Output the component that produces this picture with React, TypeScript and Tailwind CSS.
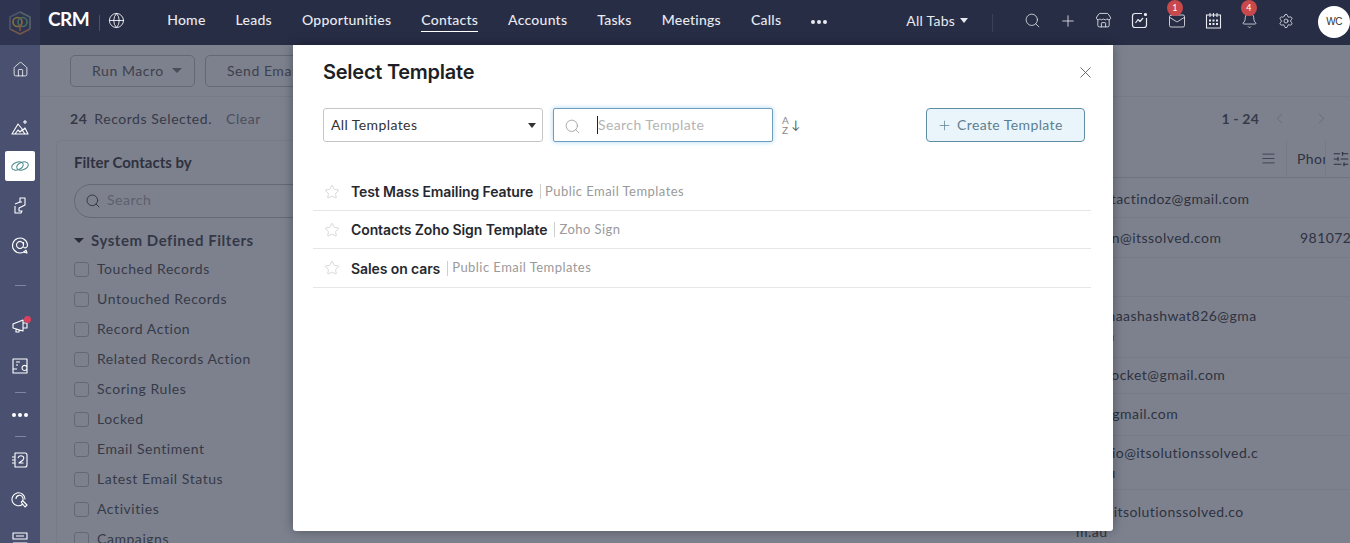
import {
  AlignJustify,
  Bell,
  ChevronLeft,
  ChevronRight,
  Globe,
  House,
  Mail,
  Plus,
  Search,
  Settings,
  SlidersHorizontal,
  Star,
  Store,
  X,
} from "lucide-react";

const navItems = ["Home", "Leads", "Opportunities", "Contacts", "Accounts", "Tasks", "Meetings", "Calls"];

const filters = [
  "Touched Records",
  "Untouched Records",
  "Record Action",
  "Related Records Action",
  "Scoring Rules",
  "Locked",
  "Email Sentiment",
  "Latest Email Status",
  "Activities",
  "Campaigns",
];

const rows = [
  { box: "h-[40px] pt-[11px]", email: "a.contactindoz@gmail.com", phone: "" },
  { box: "h-[40px] pt-[10px]", email: "roshan@itssolved.com", phone: "9810722" },
  { box: "h-[39px] pt-[10px]", email: "", phone: "" },
  { box: "h-[61px] pt-[9px]", email: "sharmaashashwat826@gma\nil.com", phone: "" },
  { box: "h-[36px] pt-[7px]", email: "alex.rocket@gmail.com", phone: "" },
  { box: "h-[42px] pt-[10px]", email: "ravi@gmail.com", phone: "" },
  { box: "h-[54px] pt-[7px]", email: "astudio@itsolutionssolved.c\nom.au", phone: "" },
  { box: "h-[60px] pt-[12px]", email: "info@itsolutionssolved.co\nm.au", phone: "" },
];

const templates = [
  { name: "Test Mass Emailing Feature", group: "Public Email Templates", h: "h-[38px]" },
  { name: "Contacts Zoho Sign Template", group: "Zoho Sign", h: "h-[38px]" },
  { name: "Sales on cars", group: "Public Email Templates", h: "h-[39px]" },
];

function Logo() {
  return (
    <svg width="24" height="26" viewBox="0 0 24 26" fill="none" strokeWidth="1.6">
      <path d="M12 2 22 7v12" stroke="#55656a" />
      <path d="M22 19 12 24 2 19" stroke="#73564c" />
      <path d="M2 19V7l10-5" stroke="#4b5868" />
      <circle cx="9.5" cy="12" r="4.5" stroke="#8a6f3a" />
      <circle cx="14.5" cy="12" r="4.5" stroke="#477060" />
      <path d="M12 15v6" stroke="#7d544d" />
    </svg>
  );
}

function SideIcon({ d }: { d: string }) {
  return (
    <svg width="18" height="18" viewBox="0 0 18 18" fill="none" stroke="#ffffff" strokeWidth="1.1" strokeLinejoin="round">
      <path d={d} />
    </svg>
  );
}

function Divider() {
  return <div className="h-px w-[11px] bg-[#7f86a0]" />;
}

function Dots({ color }: { color: string }) {
  return (
    <span className="flex gap-[2px]">
      <span className={`h-[4px] w-[4px] rounded-full ${color}`} />
      <span className={`h-[4px] w-[4px] rounded-full ${color}`} />
      <span className={`h-[4px] w-[4px] rounded-full ${color}`} />
    </span>
  );
}

function Sidebar() {
  return (
    <aside className="flex w-10 shrink-0 flex-col items-center overflow-hidden bg-[#4a5170] [&>*]:shrink-0">
      <div className="flex h-[48px] items-center">
        <House size={17} strokeWidth={1.1} className="text-white" />
      </div>
      <div className="flex h-[57px] items-end pb-[14px]">
        <SideIcon d="M1 16 7 6 12 12 14 10 17 16ZM4 16 7 12 9 14 11 12 14 16M14 2V6M12 4H16" />
      </div>
      <div className="mt-[1px] flex h-[30px] w-[30px] items-center justify-center rounded-[2px] bg-white">
        <svg width="20" height="14" viewBox="0 0 20 14" fill="none" stroke="#4d8a8e" strokeWidth="1">
          <ellipse cx="7.5" cy="7" rx="6" ry="3.8" transform="rotate(-20 7.5 7)" />
          <ellipse cx="12.5" cy="7" rx="6" ry="3.8" transform="rotate(-20 12.5 7)" />
        </svg>
      </div>
      <div className="mt-[15px] flex h-[18px] items-center">
        <SideIcon d="M4 10V17H10L11 15H8V12L14 9V2H9V6L4 8M8 6H11" />
      </div>
      <div className="mt-[22px] flex h-[18px] items-center">
        <SideIcon d="M15 14A7.5 7.5 0 1 1 16.5 9C16.5 12 13.5 12.5 12.5 11M12.5 9A3.5 3.5 0 1 1 12.5 8.9V6M15 14L16 17L12 16" />
      </div>
      <div className="mt-[31px]">
        <Divider />
      </div>
      <div className="relative mt-[31px] flex h-[18px] items-center">
        <SideIcon d="M2 7 12 3V14L2 11ZM5 12V15H8V13M12 6H16V11H12" />
        <span className="absolute -top-[1px] -right-[2px] h-[7px] w-[7px] rounded-full bg-[#d9415f]" />
      </div>
      <div className="mt-[22px] flex h-[18px] items-center">
        <SideIcon d="M2 2H16V16H2ZM5 5H9M5 8H7M11 11A2.5 2.5 0 1 0 11 10.9M2 12H6" />
      </div>
      <div className="mt-[17px]">
        <Divider />
      </div>
      <div className="mt-[20px]">
        <Dots color="bg-white" />
      </div>
      <div className="mt-[19px]">
        <Divider />
      </div>
      <div className="mt-[14px] flex h-[18px] items-center">
        <SideIcon d="M4 2H14Q16 2 16 4V14Q16 16 14 16H4ZM1 6H4M1 9H4M1 12H4M7 7Q8 4 11 5T12 9L8 12H12.5" />
      </div>
      <div className="mt-[22px] flex h-[18px] items-center">
        <SideIcon d="M12 13A6.5 6.5 0 1 1 14 8.5M5 8A3.5 3.5 0 1 1 10 11M10 11 14 16 16 14 12 10" />
      </div>
      <div className="mt-[22px] flex h-[18px] items-center">
        <SideIcon d="M2 2H16V8H2ZM5 5H13M2 12H16V18H2" />
      </div>
    </aside>
  );
}

function TopNav() {
  return (
    <header className="flex h-[45px] shrink-0 items-center bg-[#272d45] font-['Lato',sans-serif] text-[14px] tracking-[0.25px] text-[#e8eaf0]">
      <div className="flex h-full w-10 items-center justify-center bg-[#2f3550]">
        <Logo />
      </div>
      <span className="mb-[6px] ml-2 text-[19px] font-bold tracking-[-0.5px] text-white">CRM</span>
      <span className="ml-[10px] h-[16px] w-px bg-[#4a5170]" />
      <Globe size={17} strokeWidth={1.2} className="mb-[5px] ml-[8px] text-white" />
      <nav className="mb-[6px] ml-[42px] flex items-center gap-[30px]">
        {navItems.map((item) => (
          <span key={item} className="relative font-medium">
            {item}
            {item === "Contacts" && <span className="absolute -bottom-[2px] left-0 h-px w-full bg-white" />}
          </span>
        ))}
        <span className="mt-[5px]">
          <Dots color="bg-[#e8eaf0]" />
        </span>
      </nav>
      <span className="mb-[4px] ml-[79px] flex items-center gap-[5px] font-normal whitespace-nowrap">
        All Tabs
        <span className="h-0 w-0 border-x-[4.5px] border-t-[5px] border-x-transparent border-t-[#e8eaf0]" />
      </span>
      <span className="ml-[24px] h-[18px] w-px bg-[#3a4059]" />
      <div className="mb-[4px] ml-[21px] flex items-center">
        <span className="flex w-[36px] justify-center"><Search size={17} strokeWidth={1.1} /></span>
        <span className="flex w-[36px] justify-center"><Plus size={18} strokeWidth={1.1} /></span>
        <span className="flex w-[35px] justify-center"><Store size={17} strokeWidth={1.2} /></span>
        <span className="flex w-[37px] justify-center">
          <svg width="17" height="17" viewBox="0 0 17 17" fill="none" stroke="currentColor" strokeWidth="1.2" strokeLinejoin="round">
            <path d="M11 1.5H4Q1.5 1.5 1.5 4V13Q1.5 15.5 4 15.5H13Q15.5 15.5 15.5 13V6" />
            <path d="M4.5 11 7 7.5 9 9.5 12 6" />
            <circle cx="14.5" cy="2.5" r="1" fill="currentColor" />
          </svg>
        </span>
        <span className="relative flex w-[37px] justify-center">
          <Mail size={18} strokeWidth={1.1} />
          <span className="absolute -top-[12px] left-[9px] flex h-[16px] w-[16px] items-center justify-center rounded-full bg-[#c9484c] text-[9px] text-white">1</span>
        </span>
        <span className="flex w-[36px] justify-center">
          <svg width="17" height="17" viewBox="0 0 17 17" fill="none" stroke="currentColor" strokeWidth="1.1">
            <path d="M1.5 3H15.5V16H1.5ZM5 1V5M8.5 1V5M12 1V5" />
            <path d="M4 7.5H6V9.5H4ZM7.5 7.5H9.5V9.5H7.5ZM11 7.5H13V9.5H11ZM4 11H6V13H4ZM7.5 11H9.5V13H7.5ZM11 11H13V13H11Z" fill="currentColor" stroke="none" />
          </svg>
        </span>
        <span className="relative flex w-[37px] justify-center">
          <Bell size={17} strokeWidth={1.1} />
          <span className="absolute -top-[12px] left-[10px] flex h-[16px] w-[16px] items-center justify-center rounded-full bg-[#c9484c] text-[9px] text-white">4</span>
        </span>
        <span className="flex w-[36px] justify-center"><Settings size={16} strokeWidth={1.2} /></span>
      </div>
      <span className="mb-[2px] ml-[14px] flex h-[32px] w-[32px] items-center justify-center rounded-full bg-white font-['Liberation_Sans',sans-serif] text-[10px] tracking-[-0.5px] text-[#333]">
        WC
      </span>
    </header>
  );
}

function FilterPanel() {
  return (
    <section className="ml-[16px] w-[290px] shrink-0 rounded-tl-[6px] border-t border-l border-[#767b88] pt-[11px] pl-[17px]">
      <h3 className="text-[15px] leading-[21px] font-bold text-[#2e3240]">Filter Contacts by</h3>
      <div className="mt-[11px] flex h-[34px] w-[400px] items-center gap-[6px] rounded-full border border-[#636875] pl-[10px]">
        <Search size={16} strokeWidth={1.5} className="text-[#343846]" />
        <span className="pb-[3px] text-[14px] tracking-[0.5px] text-[#5c606c]">Search</span>
      </div>
      <div className="mt-[12px] flex items-center gap-[7px]">
        <span className="h-0 w-0 border-x-[5px] border-t-[5px] border-x-transparent border-t-[#272b38]" />
        <span className="text-[15px] leading-[21px] font-bold tracking-[0.55px] text-[#343846]">System Defined Filters</span>
      </div>
      <ul className="mt-[9px] flex flex-col gap-[12px]">
        {filters.map((f) => (
          <li key={f} className="flex h-[18px] items-center gap-[8px] text-[14px] leading-[18px] tracking-[0.55px] text-[#363a47]">
            <span className="h-[15px] w-[15px] rounded-[3px] border border-[#636875]" />
            {f}
          </li>
        ))}
      </ul>
    </section>
  );
}

function ContactsTable() {
  return (
    <section className="ml-[730px] flex w-[274px] shrink-0 flex-col overflow-hidden text-[14px] tracking-[0.45px] text-[#2e3240]">
      <div className="flex h-[38px] shrink-0 items-center border-b border-[#6e7380]">
        <AlignJustify size={15} strokeWidth={1.2} className="ml-[185px] shrink-0 text-[#2e3240]" />
        <span className="ml-[10px] h-full w-px shrink-0 bg-[#757a87]" />
        <span className="ml-[10px] w-[28px] shrink-0 overflow-hidden">Phone</span>
        <span className="h-full w-px shrink-0 bg-[#757a87]" />
        <SlidersHorizontal size={18} strokeWidth={1.5} className="ml-[6px] shrink-0" />
      </div>
      {rows.map((r, i) => (
        <div key={i} className={`flex ${r.box} shrink-0 items-start border-b border-[#767b88] leading-[20px]`}>
          <div className="w-[184px] shrink-0 whitespace-pre-wrap">{r.email}</div>
          <div className="ml-[40px] whitespace-nowrap">{r.phone}</div>
        </div>
      ))}
    </section>
  );
}

function TemplateModal() {
  return (
    <div className="absolute top-[45px] left-[293px] flex h-[486px] w-[820px] flex-col rounded-b-[3px] bg-white pt-[14px] font-['Inter',sans-serif] shadow-[0_0_12px_rgba(0,0,0,0.35)]">
      <div className="flex items-center justify-between pr-[18px] pl-[30px]">
        <h2 className="text-[20px] leading-[26px] font-semibold tracking-[-0.25px] text-[#1d1f26]">Select Template</h2>
        <X size={19} strokeWidth={1.1} className="text-[#555]" />
      </div>
      <div className="mt-[23px] flex items-center pr-[28px] pl-[30px] font-['Lato',sans-serif] text-[14px] tracking-[0.4px]">
        <div className="flex h-[34px] w-[220px] items-center justify-between rounded-[3px] border border-[#c6c6c6] pr-[6px] pb-[2px] pl-[7px] text-[#333]">
          All Templates
          <span className="mt-[2px] h-0 w-0 border-x-[4px] border-t-[5px] border-x-transparent border-t-[#333]" />
        </div>
        <div className="ml-[10px] flex h-[34px] w-[220px] items-center rounded-[2px] border border-[#6f9dbc] pl-[10px] text-[#b4b4b4] shadow-[0_0_5px_rgba(120,190,240,0.6)]">
          <Search size={17} strokeWidth={1} className="mt-[2px] text-[#8a8a8a]" />
          <span className="ml-[16px] h-[18px] w-px bg-[#222]" />
          <span className="pb-[2px]">Search Template</span>
        </div>
        <div className="ml-[9px] flex items-center gap-[2px] text-[#8a8a8a]">
          <span className="flex flex-col text-[10px] leading-[10px]">
            <span>A</span>
            <span>Z</span>
          </span>
          <span className="text-[12px] text-[#555]">↓</span>
        </div>
        <button className="ml-auto flex h-[34px] w-[159px] items-center gap-[5px] rounded-[4px] border border-[#5f8ea3] bg-[#eaf5fb] pl-[10px] text-[#5c7f90]">
          <Plus size={15} strokeWidth={1.2} />
          <span className="pb-[2px]">Create Template</span>
        </button>
      </div>
      <ul className="mt-[31px] mr-[22px] ml-[20px] flex flex-col">
        {templates.map((t) => (
          <li key={t.name} className={`flex ${t.h} items-center border-b border-[#e6e6e6] pl-[11px]`}>
            <Star size={16} strokeWidth={1} className="text-[#c4c4c4]" />
            <span className="ml-[11px] text-[14px] font-semibold tracking-[-0.1px] text-[#26282f]">{t.name}</span>
            <span className="ml-[7px] h-[15px] w-px bg-[#cfcfcf]" />
            <span className="ml-[4px] font-['Lato',sans-serif] text-[13px] tracking-[0.45px] text-[#9a9a9a]">{t.group}</span>
          </li>
        ))}
      </ul>
    </div>
  );
}

export default function App() {
  return (
    <div className="relative flex h-[543px] w-[1350px] flex-col overflow-hidden bg-[#7d818e] font-['Lato',sans-serif]">
      <TopNav />
      <div className="flex min-h-0 flex-1">
        <Sidebar />
        <main className="flex min-w-0 flex-1 flex-col">
          <div className="flex h-[52px] shrink-0 items-center gap-[10px] border-b border-[#767b88] pl-[30px] text-[14px] tracking-[0.55px] text-[#3c404d]">
            <button className="flex h-[32px] w-[125px] items-center gap-[8px] rounded-[5px] border border-[#636875] pl-[21px]">
              Run Macro
              <span className="h-0 w-0 border-x-[5px] border-t-[5px] border-x-transparent border-t-[#4a4e5b]" />
            </button>
            <button className="flex h-[32px] w-[120px] items-center rounded-[5px] border border-[#636875] pl-[21px] whitespace-nowrap">
              Send Email
            </button>
          </div>
          <div className="flex h-[43px] shrink-0 items-center pr-[20px] pl-[30px] text-[14px] tracking-[0.55px] text-[#363a47]">
            <span className="font-bold">24</span>
            <span className="ml-[7px]">Records Selected.</span>
            <span className="ml-[14px] text-[#4a4e5b]">Clear</span>
            <span className="ml-auto font-bold tracking-[0.2px]">1 - 24</span>
            <ChevronLeft size={17} strokeWidth={1.2} className="ml-[12px] text-[#636875]" />
            <ChevronRight size={17} strokeWidth={1.2} className="ml-[25px] text-[#636875]" />
          </div>
          <div className="flex min-h-0 flex-1">
            <FilterPanel />
            <ContactsTable />
          </div>
        </main>
      </div>
      <TemplateModal />
    </div>
  );
}
